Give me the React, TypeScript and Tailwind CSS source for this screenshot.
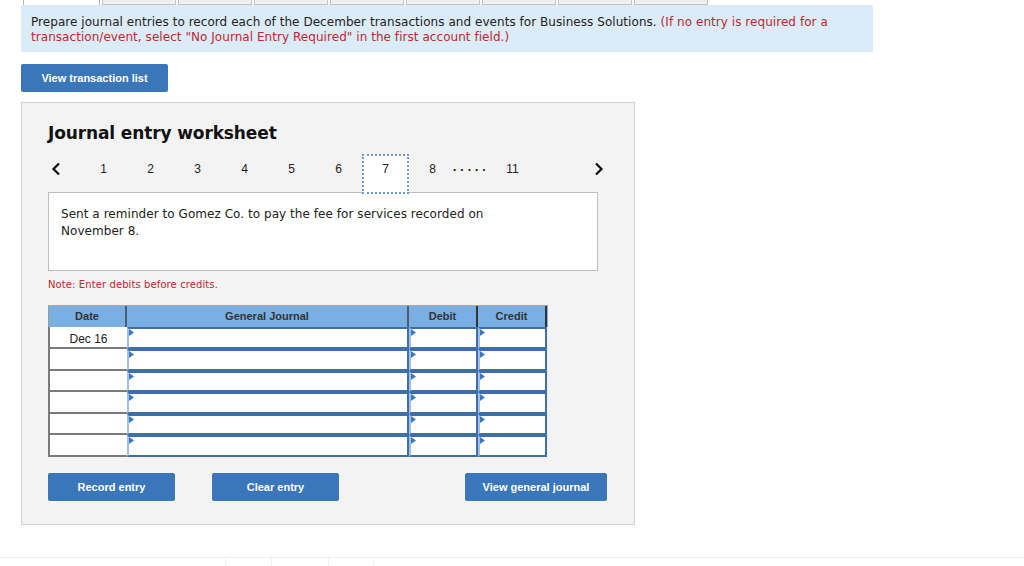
import React from "react";

const verdana = { fontFamily: '"DejaVu Sans", Verdana, sans-serif' };
const arial = { fontFamily: '"Liberation Sans", Arial, sans-serif' };

function Tri() {
  return (
    <svg className="absolute left-0 top-0" width="6" height="8" viewBox="0 0 6 8">
      <polygon points="0,0 5,3.5 0,7" fill="#3b78c4" />
    </svg>
  );
}

function InputCell({ w }: { w: string }) {
  return (
    <div className={`relative ${w} h-full bg-white border-2 border-[#3f6fab] border-l-[#9fbfe6]`}>
      <Tri />
    </div>
  );
}

export default function App() {
  const rows = ["Dec 16", "", "", "", "", ""];
  const heights = ["h-[22px]", "h-[22px]", "h-[21px]", "h-[22px]", "h-[21px]", "h-[22px]"];
  return (
    <div className="w-[1024px] h-[566px] bg-white overflow-hidden relative" style={verdana}>
      {/* tabs */}
      <div className="flex h-[5px] ml-[23px]">
        <div className="w-[77px] h-[5px] bg-white border-l border-r border-[#b5b5b5]" />
        {[0, 1, 2, 3, 4, 5, 6, 7].map((i) => (
          <div
            key={i}
            className="w-[74px] ml-[2px] h-[5px] bg-[#f0f0f0] border-l border-r border-b border-[#c4c4c4]"
          />
        ))}
      </div>

      {/* banner */}
      <div className="ml-[21px] w-[852px] h-[47px] bg-[#dcebf8] pl-[10px] pt-[10px] text-[12px] leading-[15px] text-[#222] tracking-[0.05px]">
        <p>
          Prepare journal entries to record each of the December transactions and events for Business Solutions.{" "}
          <span className="text-[#c0282e]">
            (If no entry is required for a transaction/event, select "No Journal Entry Required" in the first account
            field.)
          </span>
        </p>
      </div>

      {/* view transaction list */}
      <button
        className="ml-[21px] mt-[12px] w-[147px] h-[28px] bg-[#3a76ba] rounded-[2px] text-white text-[11px] font-bold flex items-center justify-center"
        style={arial}
      >
        View transaction list
      </button>

      {/* panel */}
      <div className="ml-[21px] mt-[10px] w-[614px] h-[423px] bg-[#f3f3f3] border border-[#d2d2d2] pl-[26px] pt-[20px]">
        <div className="text-[17px] font-bold leading-[20px] text-[#111] tracking-[-0.12px]">Journal entry worksheet</div>

        {/* nav */}
        <div className="relative z-10 flex items-start h-[38px] mt-[11px] text-[12px] text-[#222]" style={arial}>
          <div className="w-[32px] h-[40px] pt-[8px] pl-[3px]">
            <svg width="10" height="14" viewBox="0 0 10 14">
              <polyline points="8,1.5 2.5,7 8,12.5" fill="none" stroke="#111" strokeWidth="2.2" />
            </svg>
          </div>
          {[1, 2, 3, 4, 5, 6, 7, 8].map((n) =>
            n === 7 ? (
              <div
                key={n}
                className="w-[47px] h-[40px] bg-white border-2 border-dotted border-[#6a98d2] flex justify-center pt-[6px] leading-[14px]"
              >
                {n}
              </div>
            ) : (
              <div key={n} className="w-[47px] h-[40px] flex justify-center pt-[8px] leading-[14px]">
                {n}
              </div>
            )
          )}
          <div className="w-[35px] -ml-[3px] pt-[6px] leading-[14px] font-bold tracking-[4px] text-[#111]">.....</div>
          <div className="w-[47px] ml-[1px] flex justify-center pt-[8px] leading-[14px]">11</div>
          <div className="ml-[58px] pt-[8px]">
            <svg width="10" height="14" viewBox="0 0 10 14">
              <polyline points="2,1.5 7.5,7 2,12.5" fill="none" stroke="#111" strokeWidth="2.2" />
            </svg>
          </div>
        </div>

        {/* description */}
        <div className="w-[550px] h-[79px] bg-white border border-[#bdbdbd] pl-[12px] pt-[13px] text-[12px] leading-[17px] text-[#222] tracking-[0.05px]">
          Sent a reminder to Gomez Co. to pay the fee for services recorded on
          <br />
          November 8.
        </div>

        <div className="mt-[7px] text-[10px] leading-[13px] text-[#c0282e] tracking-[0.1px]">
          Note: Enter debits before credits.
        </div>

        {/* table */}
        <div className="mt-[14px] w-[500px]" style={arial}>
          <div className="flex h-[22px] bg-[#7aafe4] text-[11px] font-bold text-[#333] border-t border-[#a8a8a8]">
            <div className="w-[79px] flex items-center justify-center border-l border-[#9a9a9a] border-r-2 border-r-[#4c5d72]">
              Date
            </div>
            <div className="w-[282px] flex items-center justify-center border-r-2 border-[#4c5d72]">General Journal</div>
            <div className="w-[69px] flex items-center justify-center border-r-2 border-[#333]">Debit</div>
            <div className="w-[69px] flex items-center justify-center border-r-2 border-[#333]">Credit</div>
          </div>
          {rows.map((d, i) => (
            <div key={i} className={`flex ${heights[i]}`}>
              <div className="w-[79px] h-full bg-white border-l-2 border-b-2 border-[#7a7a7a] flex items-center justify-center pt-[4px] text-[12px] text-[#222]">
                {d}
              </div>
              <InputCell w="w-[282px]" />
              <InputCell w="w-[69px]" />
              <InputCell w="w-[69px]" />
            </div>
          ))}
        </div>

        {/* buttons */}
        <div className="flex mt-[16px]" style={arial}>
          <button className="w-[127px] h-[28px] bg-[#3a76ba] rounded-[2px] text-white text-[11px] font-bold flex items-center justify-center">
            Record entry
          </button>
          <button className="ml-[37px] w-[127px] h-[28px] bg-[#3a76ba] rounded-[2px] text-white text-[11px] font-bold flex items-center justify-center">
            Clear entry
          </button>
          <button className="ml-[126px] w-[142px] h-[28px] bg-[#3a76ba] rounded-[2px] text-white text-[11px] font-bold flex items-center justify-center">
            View general journal
          </button>
        </div>
      </div>

      {/* footer */}
      <div className="mt-[32px] h-[10px] border-t border-[#ececec] flex">
        <div className="ml-[225px] w-[46px] border-l border-[#f1f1f1]" />
        <div className="w-[57px] border-l border-[#f1f1f1]" />
        <div className="w-[46px] border-l border-r border-[#f1f1f1]" />
      </div>
    </div>
  );
}
